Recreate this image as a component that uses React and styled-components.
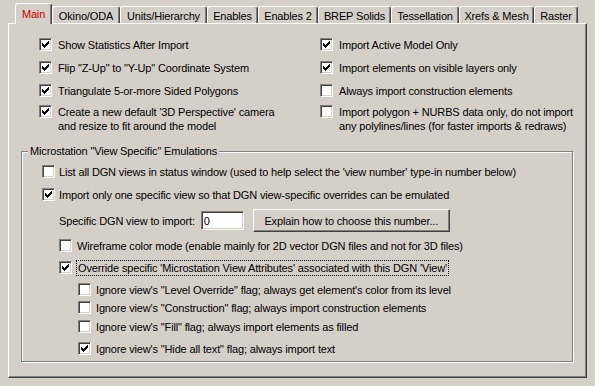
import React from 'react';
import styled, { createGlobalStyle } from 'styled-components';

const GlobalStyle = createGlobalStyle`
  html, body {
    margin: 0;
    padding: 0;
    background: #d4d0c8;
  }
  body {
    font-family: "Liberation Sans", Arial, sans-serif;
    font-size: 11px;
    letter-spacing: -0.15px;
    color: #000;
  }
`;

const tabs = [
  { label: 'Main', w: 37, active: true },
  { label: 'Okino/ODA', w: 68 },
  { label: 'Units/Hierarchy', w: 87 },
  { label: 'Enables', w: 51 },
  { label: 'Enables 2', w: 60 },
  { label: 'BREP Solids', w: 73 },
  { label: 'Tessellation', w: 68 },
  { label: 'Xrefs & Mesh', w: 75 },
  { label: 'Raster', w: 44 },
];

const topOptions = [
  { label: 'Show Statistics After Import', checked: true },
  { label: 'Import Active Model Only', checked: true },
  { label: 'Flip "Z-Up" to "Y-Up" Coordinate System', checked: true },
  { label: 'Import elements on visible layers only', checked: true },
  { label: 'Triangulate 5-or-more Sided Polygons', checked: true },
  { label: 'Always import construction elements', checked: false },
  { label: ["Create a new default '3D Perspective' camera", 'and resize to fit around the model'], checked: true },
  { label: ['Import polygon + NURBS data only, do not import', 'any polylines/lines (for faster imports & redraws)'], checked: false },
];

const viewFlags = [
  { label: `Ignore view's "Level Override" flag; always get element's color from its level`, checked: false, mt: 8 },
  { label: `Ignore view's "Construction" flag; always import construction elements`, checked: false, mt: 4 },
  { label: `Ignore view's "Fill" flag; always import elements as filled`, checked: false, mt: 5 },
  { label: `Ignore view's "Hide all text" flag; always import text`, checked: true, mt: 8 },
];

const Dialog = styled.div`
  box-sizing: border-box;
  width: 595px;
  height: 386px;
  padding: 3px 8px 0 8px;
  background: #d4d0c8;
`;

const TabStrip = styled.div`
  display: flex;
  align-items: flex-end;
  height: 20px;
  padding-left: 7px;
  position: relative;
  z-index: 1;
`;

const Tab = styled.div`
  box-sizing: border-box;
  flex: none;
  width: ${p => p.$w}px;
  height: ${p => (p.$active ? 21 : 17)}px;
  margin-bottom: ${p => (p.$active ? -1 : 0)}px;
  padding-top: ${p => (p.$active ? 0 : 2)}px;
  border: 1px solid #fff;
  border-bottom: none;
  border-right-color: #404040;
  border-radius: 3px 3px 0 0;
  box-shadow: inset -1px 0 #808080;
  background: #d4d0c8;
  display: flex;
  align-items: center;
  justify-content: center;
  white-space: nowrap;
  color: ${p => (p.$active ? '#cc0000' : '#000')};
`;

const Panel = styled.div`
  box-sizing: border-box;
  height: 355px;
  border-top: 1px solid #fff;
  border-left: 1px solid #fff;
  border-right: 1px solid #404040;
  border-bottom: 1px solid #404040;
  box-shadow: inset -1px -1px #808080;
  padding: 14px 0 0 0;
`;

const OptionGrid = styled.div`
  display: grid;
  grid-template-columns: 281px 1fr;
  grid-template-rows: 23px 23px 21px auto;
  padding-left: 30px;
`;

const CheckRow = styled.div`
  display: flex;
  align-items: flex-start;
  gap: ${p => p.$gap ?? 5}px;
  line-height: 14px;
  white-space: nowrap;
  margin-top: ${p => p.$mt ?? 0}px;
  padding-left: ${p => p.$indent ?? 0}px;
`;

const Box = styled.span`
  box-sizing: border-box;
  flex: none;
  width: 13px;
  height: 13px;
  background: #fff;
  border-top: 1px solid #808080;
  border-left: 1px solid #808080;
  border-right: 1px solid #fff;
  border-bottom: 1px solid #fff;
  box-shadow: inset 1px 1px #404040, inset -1px -1px #d4d0c8;
  display: flex;
  align-items: center;
  justify-content: center;
`;

const Label = styled.span`
  display: block;
`;

const FocusLabel = styled.span`
  display: block;
  padding: 0 1px;
  outline: 1px dotted #000;
`;

const GroupBox = styled.fieldset`
  box-sizing: border-box;
  width: 552px;
  margin: 11px 0 0 12px;
  padding: 7px 0 5px 20px;
  border: 1px solid #808080;
  box-shadow: 1px 1px 0 #fff, inset 1px 1px 0 #fff;
  min-width: 0;
`;

const Legend = styled.legend`
  margin-left: -14px;
  padding: 0 2px;
  line-height: 14px;
  background: #d4d0c8;
`;

const FieldRow = styled.div`
  display: flex;
  align-items: center;
  height: 23px;
  margin-top: 7px;
  padding-left: 17px;
  white-space: nowrap;
`;

const NumberField = styled.input`
  box-sizing: border-box;
  width: 43px;
  height: 19px;
  margin: 0 0 0 6px;
  padding: 0 2px;
  font: inherit;
  letter-spacing: inherit;
  color: #000;
  background: #fff;
  border-top: 1px solid #808080;
  border-left: 1px solid #808080;
  border-right: 1px solid #fff;
  border-bottom: 1px solid #fff;
  box-shadow: inset 1px 1px #404040, inset -1px -1px #d4d0c8;
  outline: none;
`;

const Button = styled.button`
  box-sizing: border-box;
  width: 197px;
  height: 23px;
  margin-left: 9px;
  padding: 0;
  font: inherit;
  letter-spacing: inherit;
  color: #000;
  background: #d4d0c8;
  border: 1px solid;
  border-color: #fff #404040 #404040 #fff;
  box-shadow: inset -1px -1px #808080;
`;

function Tick() {
  return (
    <svg width="7" height="7" viewBox="0 0 7 7" shapeRendering="crispEdges">
      <path
        fill="#000"
        d="M6 0h1v1h-1z M5 1h2v1h-2z M0 2h1v1h-1z M4 2h3v1h-3z M0 3h2v1h-2z M3 3h3v1h-3z M0 4h5v1h-5z M1 5h3v1h-3z M2 6h1v1h-1z"
      />
    </svg>
  );
}

function Check({ checked, label, focused, ...rest }) {
  const lines = Array.isArray(label) ? label : [label];
  const Text = focused ? FocusLabel : Label;
  return (
    <CheckRow {...rest}>
      <Box>{checked && <Tick />}</Box>
      <Text>
        {lines.map((l, i) => (
          <div key={i}>{l}</div>
        ))}
      </Text>
    </CheckRow>
  );
}

export default function App() {
  return (
    <>
      <GlobalStyle />
      <Dialog>
        <TabStrip>
          {tabs.map(t => (
            <Tab key={t.label} $w={t.w} $active={t.active}>
              {t.label}
            </Tab>
          ))}
        </TabStrip>
        <Panel>
          <OptionGrid>
            {topOptions.map((o, i) => (
              <Check key={i} label={o.label} checked={o.checked} $gap={6} />
            ))}
          </OptionGrid>
          <GroupBox>
            <Legend>Microstation "View Specific" Emulations</Legend>
            <Check
              checked={false}
              label="List all DGN views in status window (used to help select the 'view number' type-in number below)"
              $gap={4}
            />
            <Check
              checked
              label="Import only one specific view so that DGN view-specific overrides can be emulated"
              $gap={4}
              $mt={9}
            />
            <FieldRow>
              Specific DGN view to import:
              <NumberField defaultValue="0" />
              <Button>Explain how to choose this number...</Button>
            </FieldRow>
            <Check
              checked={false}
              label="Wireframe color mode (enable mainly for 2D vector DGN files and not for 3D files)"
              $mt={7}
              $indent={17}
            />
            <Check
              checked
              focused
              label="Override specific 'Microstation View Attributes' associated with this DGN 'View'"
              $mt={8}
              $indent={17}
            />
            {viewFlags.map((f, i) => (
              <Check key={i} label={f.label} checked={f.checked} $mt={f.mt} $indent={36} />
            ))}
          </GroupBox>
        </Panel>
      </Dialog>
    </>
  );
}
